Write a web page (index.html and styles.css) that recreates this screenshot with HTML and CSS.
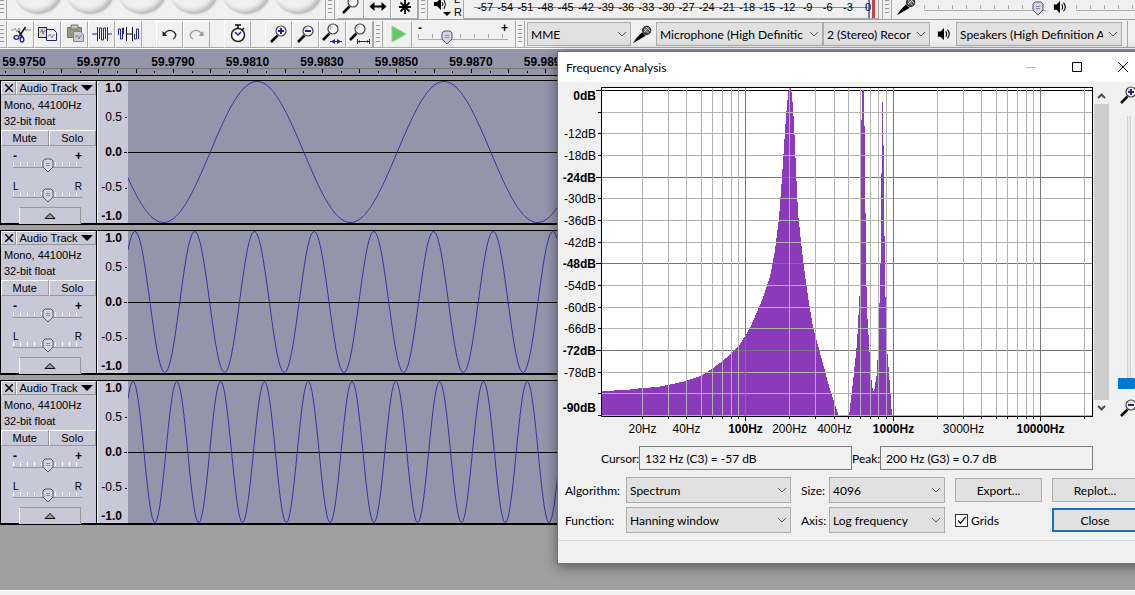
FILE: index.html
```html
<!DOCTYPE html>
<html lang="en">
<head>
  <meta charset="UTF-8">
  <meta name="viewport" content="width=device-width, initial-scale=1.0">
  <title>Audio Editor</title>
  <link rel="stylesheet" href="styles.css">
</head>
<body>
  <!-- shared icons -->
  <svg class="symbols" aria-hidden="true">
    <symbol id="i-lens" viewBox="0 0 24 24">
      <path d="M10.500 12.500L4 19" stroke="#000" stroke-width="2.500"/>
      <circle cx="14" cy="8" r="5" fill="#f4f4f8" stroke="#444" stroke-width="1.200"/>
      <path d="M11 8a3 3 0 0 1 3-3" fill="none" stroke="#bbb"/>
    </symbol>
    <symbol id="i-mic" viewBox="0 0 24 24">
      <path d="M1 22l4-6 6-6 4 4-7 4z" fill="#000"/>
      <circle cx="16" cy="8" r="4.500" fill="#555" stroke="#000"/>
      <path d="M13 6l5 5M15 4l5 5M13 10l5-5" stroke="#ddd"/>
    </symbol>
    <symbol id="i-speaker" viewBox="0 0 16 16">
      <path d="M1 5h3l4-4v14l-4-4H1z" fill="#000"/>
      <path d="M10 5q2 3 0 6M12 3q4 5 0 10" fill="none" stroke="#000" stroke-width="1.200"/>
    </symbol>
  </svg>

  <div class="app">
    <div class="toolbar toolbar-top">
      <span class="grip grip-first"></span>
      <div class="transport">
        <button aria-label="Pause"></button>
        <button aria-label="Play"></button>
        <button aria-label="Stop"></button>
        <button aria-label="Skip to start"></button>
        <button aria-label="Skip to end"></button>
        <button aria-label="Record"></button>
      </div>
      <span class="grip"></span>
      <button class="tool" aria-label="Zoom tool"><svg viewBox="0 0 24 24"><use href="#i-lens"/></svg></button>
      <button class="tool" aria-label="Time shift"><svg viewBox="0 0 24 24"><path d="M5 12.500h14" stroke="#000" stroke-width="2"/><path d="M8.500 8v9L3.500 12.500zM15.500 8v9l5-4.500z"/></svg></button>
      <button class="tool" aria-label="Multi-tool"><svg viewBox="0 0 24 24"><path d="M12 6v14M6 13h12M7.500 8.500l9 9M16.500 8.500l-9 9" stroke="#000" stroke-width="1.800"/></svg></button>
      <span class="grip"></span>
      <div class="meter">
        <svg class="meter-icon" viewBox="0 0 24 27">
          <path d="M4 10h3l4-4v12l-4-4H4z"/>
          <path d="M12 10q2 2 0 4M14 8q3 4 0 9" fill="none" stroke="#000"/>
          <path d="M13 20h8l-4 4z"/>
        </svg>
        <div class="channels"><span>L</span><span>R</span></div>
        <div class="scale">
          <span>-57</span><span>-54</span><span>-51</span><span>-48</span><span>-45</span><span>-42</span><span>-39</span><span>-36</span><span>-33</span><span>-30</span><span>-27</span><span>-24</span><span>-21</span><span>-18</span><span>-15</span><span>-12</span><span>-9</span><span>-6</span><span>-3</span><span>0</span>
        </div>
      </div>
      <span class="grip"></span>
      <svg class="mic" viewBox="0 0 24 24"><use href="#i-mic"/></svg>
      <input class="level" type="range" value="98" aria-label="Recording volume">
      <svg class="speaker" viewBox="0 0 16 16"><use href="#i-speaker"/></svg>
      <input class="level" type="range" value="80" aria-label="Playback volume">
    </div>

    <div class="toolbar">
      <span class="grip grip-first"></span>
      <button class="tool" aria-label="Cut"><svg viewBox="0 0 24 24"><path d="M2 8h3l1-2 2 4 2-4 1 3M15 8l1-2 1 3 1-2 1 1h3" fill="none" stroke="#999"/><path d="M16.500 5l-6 9M9.500 9l4 6" stroke="#111" stroke-width="1.500"/><g fill="none" stroke="#22228c" stroke-width="1.300"><ellipse cx="7.500" cy="15.500" rx="2.500" ry="1.800"/><ellipse cx="13" cy="17.500" rx="1.800" ry="2.500"/></g></svg></button>
      <button class="tool" aria-label="Copy"><svg viewBox="0 0 24 24"><path d="M2.500 5.500h8v10h-8z" fill="#ddd" stroke="#222"/><path d="M4 10h1l1-3 1 5 1-3h2" fill="none" stroke="#777"/><path d="M10.500 7.500h7l3 3v8h-10z" fill="#eee" stroke="#22228c"/><path d="M12 14h1l1-2 2 4 1-3h2" fill="none" stroke="#888"/></svg></button>
      <button class="tool" aria-label="Paste"><svg viewBox="0 0 24 24"><path d="M4.500 5.500h14v10h-14z" fill="#98987c" stroke="#777"/><path d="M8 3h7v4H8z" fill="#c4c4b8" stroke="#777"/><path d="M10.500 9.500h7l3 3v7h-10z" fill="#ccccd4" stroke="#8080a0"/><path d="M12 15h1l1-2 2 4 1-3h2" fill="none" stroke="#888"/></svg></button>
      <button class="tool" aria-label="Trim"><svg viewBox="0 0 24 24"><path d="M2 12h5M18 12h4M7.500 5v14M17.500 5v14" stroke="#22228c"/><path d="M9.500 17V6h2v12h2V6h2v11" fill="none" stroke="#22228c"/></svg></button>
      <button class="tool" aria-label="Silence"><svg viewBox="0 0 24 24"><path d="M1.500 13V7h2v10h2V6h1v6M17.500 12v5h2V7h2v10" fill="none" stroke="#22228c"/><path d="M9.500 5v14M15.500 5v14M9 12h7" stroke="#111"/></svg></button>
      <span class="space"></span>
      <button class="tool" aria-label="Undo"><svg viewBox="0 0 24 24"><path d="M6 12q5-6 10-2 4 4-1 7" fill="none" stroke="#222" stroke-width="1.300"/><path d="M4.500 9v5h5z" fill="#222"/></svg></button>
      <button class="tool" aria-label="Redo"><svg viewBox="0 0 24 24"><path d="M17 12q-5-6-10-2-4 4 1 7" fill="none" stroke="#999" stroke-width="1.300"/><path d="M18.500 9v5h-5z" fill="#999"/></svg></button>
      <span class="space"></span>
      <button class="tool" aria-label="Sync-lock"><svg viewBox="0 0 24 24"><circle cx="12" cy="13" r="6.500" fill="#fff" stroke="#222" stroke-width="1.500"/><path d="M12 6V2.500M9 3h6M18 6l-2 2" stroke="#111" stroke-width="1.500"/><path d="M9 10l3 3 3-3" fill="none" stroke="#22228c" stroke-width="1.500"/></svg></button>
      <span class="space"></span>
      <button class="tool" aria-label="Zoom in"><svg viewBox="0 0 24 24"><use href="#i-lens" y="1"/><path d="M11 9h6M14 6v6" stroke="#22228c" stroke-width="2"/></svg></button>
      <button class="tool" aria-label="Zoom out"><svg viewBox="0 0 24 24"><use href="#i-lens" y="1"/><path d="M11 9h6" stroke="#22228c" stroke-width="2"/></svg></button>
      <button class="tool" aria-label="Fit selection"><svg viewBox="0 0 24 24"><use href="#i-lens" x="-2" y="-1"/><path d="M9 19.500h12" stroke="#22228c"/><path d="M14 17v5l-4-2.500zM16 17v5l4-2.500z" fill="#22228c"/></svg></button>
      <button class="tool" aria-label="Fit project"><svg viewBox="0 0 24 24"><use href="#i-lens" x="-2" y="-1"/><path d="M9 19.500h12M9.500 17v5M21.500 17v5" stroke="#22228c"/><path d="M12 18v3l-2-1.500zM19 18v3l2-1.500z" fill="#22228c"/></svg></button>
      <span class="grip"></span>
      <button class="tool" aria-label="Play at speed"><svg viewBox="0 0 24 24"><path d="M5 4l14 8-14 8z" fill="#62c866" stroke="#8ad68c"/></svg></button>
      <div class="speed">
        <div class="ends"><span>-</span><span>+</span></div>
        <input class="level" type="range" value="29" aria-label="Playback speed">
      </div>
      <span class="grip"></span>
      <select class="host" aria-label="Audio host"><option>MME</option></select>
      <svg class="mic" viewBox="0 0 24 24"><use href="#i-mic"/></svg>
      <select class="rec-device" aria-label="Recording device"><option>Microphone (High Definitic</option></select>
      <select class="rec-channels" aria-label="Recording channels"><option>2 (Stereo) Recor</option></select>
      <svg class="speaker" viewBox="0 0 16 16"><use href="#i-speaker"/></svg>
      <select class="play-device" aria-label="Playback device"><option>Speakers (High Definition A</option></select>
      <span class="toolbar-end"></span>
    </div>

    <div class="ruler"><svg id="ruler"></svg></div>

    <main class="tracks">
      <section class="track">
        <div class="panel">
          <div class="panel-title"><button aria-label="Close track"><svg viewBox="0 0 8 8"><path d="M0 0l8 8M8 0L0 8" stroke="#000" stroke-width="1.500"/></svg></button><button>Audio Track <i class="caret"></i></button></div>
          <p>Mono, 44100Hz<br>32-bit float</p>
          <div class="panel-buttons"><button>Mute</button><button>Solo</button></div>
          <div class="knob"><div class="ends signs"><span>-</span><span>+</span></div><input class="level" type="range" aria-label="Gain"></div>
          <div class="knob"><div class="ends"><span>L</span><span>R</span></div><input class="level" type="range" aria-label="Pan"></div>
          <button class="collapse" aria-label="Collapse"><svg viewBox="0 0 12 7"><path d="M1 6.500l5-5 5 5z" fill="#999" stroke="#000"/></svg></button>
        </div>
        <div class="amplitude"><b>1.0</b><span>0.5</span><b>0.0</b><span>-0.5</span><b>-1.0</b></div>
        <div class="wave"><svg data-peak="129" data-period="187"></svg></div>
      </section>

      <section class="track">
        <div class="panel">
          <div class="panel-title"><button aria-label="Close track"><svg viewBox="0 0 8 8"><path d="M0 0l8 8M8 0L0 8" stroke="#000" stroke-width="1.500"/></svg></button><button>Audio Track <i class="caret"></i></button></div>
          <p>Mono, 44100Hz<br>32-bit float</p>
          <div class="panel-buttons"><button>Mute</button><button>Solo</button></div>
          <div class="knob"><div class="ends signs"><span>-</span><span>+</span></div><input class="level" type="range" aria-label="Gain"></div>
          <div class="knob"><div class="ends"><span>L</span><span>R</span></div><input class="level" type="range" aria-label="Pan"></div>
          <button class="collapse" aria-label="Collapse"><svg viewBox="0 0 12 7"><path d="M1 6.500l5-5 5 5z" fill="#999" stroke="#000"/></svg></button>
        </div>
        <div class="amplitude"><b>1.0</b><span>0.5</span><b>0.0</b><span>-0.5</span><b>-1.0</b></div>
        <div class="wave"><svg data-peak="7" data-period="59.7"></svg></div>
      </section>

      <section class="track">
        <div class="panel">
          <div class="panel-title"><button aria-label="Close track"><svg viewBox="0 0 8 8"><path d="M0 0l8 8M8 0L0 8" stroke="#000" stroke-width="1.500"/></svg></button><button>Audio Track <i class="caret"></i></button></div>
          <p>Mono, 44100Hz<br>32-bit float</p>
          <div class="panel-buttons"><button>Mute</button><button>Solo</button></div>
          <div class="knob"><div class="ends signs"><span>-</span><span>+</span></div><input class="level" type="range" aria-label="Gain"></div>
          <div class="knob"><div class="ends"><span>L</span><span>R</span></div><input class="level" type="range" aria-label="Pan"></div>
          <button class="collapse" aria-label="Collapse"><svg viewBox="0 0 12 7"><path d="M1 6.500l5-5 5 5z" fill="#999" stroke="#000"/></svg></button>
        </div>
        <div class="amplitude"><b>1.0</b><span>0.5</span><b>0.0</b><span>-0.5</span><b>-1.0</b></div>
        <div class="wave"><svg data-peak="5" data-period="43.8"></svg></div>
      </section>
    </main>
    <footer class="status"></footer>
  </div>

  <div class="dialog" role="dialog" aria-labelledby="dialog-title">
    <header class="titlebar">
      <span id="dialog-title">Frequency Analysis</span>
      <button aria-label="Minimize"><svg viewBox="0 0 12 12"><path d="M1 6.500h10" stroke="#bbb"/></svg></button>
      <button aria-label="Maximize"><svg viewBox="0 0 12 12"><path d="M1.500 1.500h9v9h-9z" fill="none" stroke="#000"/></svg></button>
      <button aria-label="Close window"><svg viewBox="0 0 12 12"><path d="M1 1l10 10M11 1L1 11" stroke="#000"/></svg></button>
    </header>

    <div class="plot-area">
      <div class="plot-column">
        <svg id="plot" viewBox="0 0 535 357">
          <g transform="translate(43 5)">
            <rect width="491" height="329" fill="#fff"/>
            <path d="M0 3.500H491" stroke="#000"/>
            <g fill="#8b3abb" shape-rendering="crispEdges">
              <path d="M0 329V304L25 303 41 301 56 300 67 298 85 294 99 289 105 286 119 276 130 267 139 257 149 241 162 211 169 190 174 163 178 131 181 90 183 60 185 30 187 8 188 1 190 1 191 8 193 36 195 83 197 126 202 173 207 210 212 240 221 273 229 303 238 329z"/>
              <path d="M248 329L252 295 256 256 259 200 260 63 261 3H263L264 73 265 176 266 223 269 273 271 300 273 305 276 286 278 236 280 156 281 19 282 12 283 103 284 193 286 260 289 300 291 329z"/>
            </g>
            <g id="grid"></g>
            <rect x=".5" y=".5" width="491" height="329" fill="none" stroke="#000"/>
          </g>
        </svg>
        <div class="readouts">
          <label for="cursor">Cursor:</label><input id="cursor" readonly value="132 Hz (C3) = -57 dB">
          <label for="peak">Peak:</label><input id="peak" readonly value="200 Hz (G3) = 0.7 dB">
        </div>
      </div>
      <div class="scrollbar">
        <svg viewBox="0 0 9 6"><path d="M1 5l3.500-3.500L8 5" fill="none" stroke="#444" stroke-width="1.800"/></svg>
        <span class="scroll-thumb"></span>
        <svg viewBox="0 0 9 6"><path d="M1 1l3.500 3.500L8 1" fill="none" stroke="#444" stroke-width="1.800"/></svg>
      </div>
      <div class="zoom">
        <svg viewBox="3 2 17 18"><use href="#i-lens" width="24" height="24"/><path d="M11 8h6M14 5v6" stroke="#22228c" stroke-width="2"/></svg>
        <input type="range" value="0" aria-label="Vertical zoom">
        <svg viewBox="3 2 17 18"><use href="#i-lens" width="24" height="24"/><path d="M11 8h6" stroke="#22228c" stroke-width="2"/></svg>
      </div>
    </div>

    <form class="options">
      <label for="algorithm">Algorithm:</label>
      <select id="algorithm"><option>Spectrum</option></select>
      <label for="size">Size:</label>
      <select id="size"><option>4096</option></select>
      <button type="button">Export...</button>
      <button type="button">Replot...</button>
      <label for="function">Function:</label>
      <select id="function"><option>Hanning window</option></select>
      <label for="axis">Axis:</label>
      <select id="axis"><option>Log frequency</option></select>
      <label class="check"><input type="checkbox" checked>Grids</label>
      <button type="button" class="default">Close</button>
    </form>
    <div class="dialog-status"></div>
  </div>

  <script src="script.js"></script>
</body>
</html>
```
FILE: styles.css
```css
*, *::before, *::after { box-sizing: border-box; }
body { margin: 0; height: 100vh; overflow: hidden; position: relative; font-family: Lato, "Open Sans", sans-serif; font-size: 12px; color: #000; background: #a0a0a0; }
button, input, select { font: inherit; color: inherit; margin: 0; }
button { padding: 0; border: 0; background: none; display: flex; align-items: center; justify-content: center; }
svg { display: block; flex-shrink: 0; }
.symbols { position: absolute; width: 0; height: 0; }
.app { display: flex; flex-direction: column; height: 100%; }

/* selects */
select {
  appearance: none;
  height: 24px;
  padding: 0 18px 0 3px;
  border: 1px solid #adadad;
  border-radius: 0;
  background: #e1e1e1 url("data:image/svg+xml,%3Csvg xmlns='http://www.w3.org/2000/svg' width='10' height='6'%3E%3Cpath d='M1 1l4 4 4-4' fill='none' stroke='%23555'/%3E%3C/svg%3E") no-repeat right 3px center;
}

/* toolbars */
.toolbar { display: flex; align-items: center; flex-shrink: 0; height: 29px; background: #f0f0f0; border-bottom: 1px solid #fff; box-shadow: inset 0 -1px #a8a8a8; overflow: hidden; white-space: nowrap; }
.toolbar > * { flex-shrink: 0; }
.toolbar-top { height: 20px; align-items: flex-end; border-bottom: 1px solid #a0a0a0; box-shadow: none; }
.grip { width: 10px; height: 27px; border: 1px solid #a8a8a8; border-width: 0 1px; background: repeating-linear-gradient(#999 0 1px, #f0f0f0 1px 4px) content-box; padding: 4px 2px; margin-right: 2px; }
.grip-first { width: 7px; margin-right: 0; border-left: 0; padding-left: 0; }
.tool { width: 27px; height: 27px; border: 1px solid; border-color: #fff #a8a8a8 #a8a8a8 #fff; }
.tool svg { width: 24px; height: 24px; }
.space { width: 14px; }
.transport { display: flex; gap: 2px; width: 318px; height: 27px; padding: 0 0 5px 6px; align-items: flex-end; }
.transport button { width: 50px; height: 50px; flex-shrink: 0; border-radius: 50%; background: #f0f0f0; box-shadow: inset -3px -3px 4px #bbb, 1px 1px 2px #ddd; }
.meter { display: flex; width: 449px; height: 27px; margin-right: 3px; align-items: center; font: 11px "Liberation Sans", sans-serif; }
.meter-icon { width: 24px; height: 27px; }
.channels { display: flex; flex-direction: column; justify-content: space-between; height: 25px; width: 9px; }
.scale { display: flex; flex: 1; height: 27px; padding: 0 0 0 11px; border: 1px solid #a8a8a8; line-height: 28px; text-align: center; background: linear-gradient(90deg, transparent 404px, #7078b8 404px 406px, transparent 406px 408px, #d04040 408px 411px, transparent 411px), linear-gradient(#888, #888) 10px 14px / 394px 1px no-repeat; }
.scale span { flex: 1 0 20px; }
.mic { width: 22px; height: 24px; margin: 0 2px 0 1px; }
.speaker { width: 14px; height: 14px; margin: 0 5px 0 7px; }
.toolbar-top .mic { margin: 0 6px 1px 2px; }
.toolbar-top .speaker { margin: 0 9px 5px 7px; }
.toolbar-top .level { width: 122px; margin-bottom: 3px; }
.host { width: 104px; }
.rec-device { width: 167px; }
.rec-channels { width: 107px; }
.play-device { width: 166px; }
.toolbar-end { width: 6px; height: 27px; border-right: 1px solid #a8a8a8; }

/* sliders */
.level {
  appearance: none;
  display: block;
  width: 100%;
  height: 16px;
  background:
    linear-gradient(#aaa, #aaa) 0 10px / 100% 1px no-repeat,
    repeating-linear-gradient(90deg, #a8a8a8 0 1px, transparent 1px 14px) 0 5px / 100% 4px no-repeat;
}
.level::-webkit-slider-thumb {
  appearance: none;
  width: 12px;
  height: 15px;
  background: url("data:image/svg+xml,%3Csvg xmlns='http://www.w3.org/2000/svg' width='12' height='15'%3E%3Cpath d='M3 1h6l2 2v6l-5 5-5-5V3z' fill='%23d4d4e2' stroke='%23555566'/%3E%3Cpath d='M4 5.500h4M4 7.500h4' stroke='%238888a0'/%3E%3C/svg%3E");
}
.ends { display: flex; justify-content: space-between; }
.speed { width: 90px; margin: 0 7px 0 6px; font: bold 12px "Liberation Sans", sans-serif; }
.speed .ends { height: 6px; line-height: 10px; }

/* time ruler */
.ruler { flex-shrink: 0; height: 27px; background: #9494ab; border-bottom: 1px solid #000; }
.ruler svg { width: 100%; height: 26px; font: bold 12px "Liberation Sans", sans-serif; }

/* tracks */
.tracks { flex: 1; min-height: 0; padding-top: 4px; background: #a0a0a0; font-family: "Liberation Sans", sans-serif; font-size: 11px; }
.track { display: flex; height: 145px; margin-bottom: 5px; border: 1px solid #000; border-bottom-width: 2px; background: #c8c8d7; }
.panel { width: 96px; border-right: 1px solid #000; }
.panel button { border: 1px solid; border-color: #fff #999 #999 #fff; }
.panel-title { display: flex; height: 14px; }
.panel-title button:first-child { width: 15px; }
.panel-title button:last-child { flex: 1; gap: 3px; }
.panel-title svg { width: 8px; height: 8px; }
.caret { border: 6px solid transparent; border-top-color: #000; border-bottom: 0; }
.panel p { margin: 0; padding: 2px 0 0 3px; height: 35px; line-height: 16px; }
.panel-buttons { display: flex; height: 16px; }
.panel-buttons button { flex: 1; }
.knob { width: 69px; height: 30px; margin-left: 12px; padding-top: 5px; font-size: 10px; }
.knob .ends { height: 6px; line-height: 12px; }
.knob .signs { font-size: 12px; font-weight: bold; line-height: 10px; }
.knob .level {
  background:
    linear-gradient(#999, #999) 0 10px / 100% 1px no-repeat,
    repeating-linear-gradient(90deg, #fff 0 1px, transparent 1px 7px) 0 5px / 100% 4px no-repeat;
}
.panel .collapse { width: 62px; height: 17px; margin: 1px 0 0 18px; border-color: #999 #999 #c8c8d7 #fff; }
.collapse svg { width: 12px; height: 7px; }
.amplitude { display: flex; flex-direction: column; justify-content: space-between; width: 31px; padding: 0 6px 0 0; border-left: 1px solid #fff; font-size: 12px; line-height: 14px; text-align: right; background: linear-gradient(#000, #000) right 1px top 36px / 2px 1px no-repeat, linear-gradient(#000, #000) right 1px top 71px / 3px 1px no-repeat, linear-gradient(#000, #000) right 1px top 107px / 2px 1px no-repeat; }
.amplitude span:nth-child(2) { margin-bottom: 6px; }
.amplitude span:nth-child(4) { margin-top: 6px; }
.wave { flex: 1; overflow: hidden; background: #9494ab; }
.wave svg { width: 100%; height: 142px; }
.status { flex-shrink: 0; height: 5px; border-top: 1px solid #fff; background: #f0f0f0; }

/* analysis window */
.dialog { position: absolute; top: 51px; left: 557px; right: -12px; border: 1px solid #3f7fb0; background: #f0f0f0; box-shadow: 0 3px 12px rgba(0,0,0,0.45); }
.titlebar { display: flex; align-items: center; height: 30px; padding-left: 8px; background: #fff; }
.titlebar span { flex: 1; }
.titlebar button { width: 46px; height: 30px; }
.titlebar svg { width: 12px; height: 12px; }
.plot-area { display: flex; }
.plot-column { flex: 1; min-width: 0; }
#plot { width: 100%; font: 12px "Liberation Sans", sans-serif; }
.readouts { display: flex; align-items: center; height: 38px; padding-left: 43px; }
.readouts label { width: 38px; }
.readouts label:nth-of-type(2) { width: 28px; }
.readouts input { flex: 1; min-width: 0; height: 24px; padding: 0 5px; border: 1px solid #7a7a7a; border-radius: 0; background: #f0f0f0; }
.scrollbar { display: flex; flex-direction: column; align-items: center; justify-content: space-between; width: 16px; height: 330px; margin-top: 5px; padding: 6px 0; }
.scrollbar svg { width: 9px; height: 6px; }
.scroll-thumb { width: 15px; height: 296px; background: #cdcdcd; }
.zoom { display: flex; flex-direction: column; align-items: center; width: 37px; height: 331px; margin-top: 4px; padding-left: 2px; }
.zoom svg { width: 17px; height: 18px; }
.zoom input { appearance: none; flex: 1; width: 22px; margin: 12px 0 10px; writing-mode: vertical-lr; direction: rtl; background: linear-gradient(#e8e8e8, #e8e8e8) center / 2px 100% no-repeat, linear-gradient(#d0d0d0, #d0d0d0) center / 4px 100% no-repeat; }
.zoom input::-webkit-slider-thumb { appearance: none; width: 22px; height: 11px; background: #0078d7; clip-path: polygon(0 0, 75% 0, 100% 50%, 75% 100%, 0 100%); }

/* options */
.options { display: grid; grid-template-columns: 51px 1fr 18px 116px 87px 86px; gap: 4px 10px; align-items: center; padding: 0 8px 0 7px; }
.options select { height: 26px; width: 100%; }
.options button { height: 24px; border: 1px solid #adadad; background: #e1e1e1; }
.options .default { border: 2px solid #1a70b0; }
.options label { white-space: nowrap; }
.check { display: flex; align-items: center; gap: 3px; }
.check input {
  appearance: none;
  width: 13px;
  height: 13px;
  border: 1px solid #333;
  background: #fff url("data:image/svg+xml,%3Csvg xmlns='http://www.w3.org/2000/svg' width='11' height='11'%3E%3Cpath d='M2 5.500l2.500 3L9.500 2' fill='none' stroke='%23222' stroke-width='1.300'/%3E%3C/svg%3E") center no-repeat;
}
.dialog-status { height: 23px; margin-top: 7px; border-top: 1px solid #d8d8d8; }
```
FILE: script.js
```js
const NS = 'http://www.w3.org/2000/svg';

function add(parent, tag, attrs, text) {
  const el = document.createElementNS(NS, tag);
  for (const key in attrs) el.setAttribute(key, attrs[key]);
  if (text) el.textContent = text;
  parent.appendChild(el);
}

// time ruler
const ruler = document.getElementById('ruler');
add(ruler, 'path', { d: 'M0 19.5H4000', stroke: '#777' });
for (let i = -1; i < 60; i++) {
  const x = Math.round(24 + i * 18.62) + 0.5;
  add(ruler, 'path', { d: `M${x} ${i % 2 ? 22 : 20}V24`, stroke: '#000' });
}
for (let i = 0; i < 8; i++) {
  add(ruler, 'text', { x: 24 + i * 74.5, y: 17, 'text-anchor': 'middle' }, (59.975 + i * 0.002).toFixed(4));
}

// waveforms
document.querySelectorAll('.wave svg').forEach(svg => {
  const peak = Number(svg.dataset.peak);
  const period = Number(svg.dataset.period);
  const points = [];
  for (let x = 0; x < 2000; x++) {
    points.push(x + ',' + (71 - 70.5 * Math.cos(2 * Math.PI * (x - peak) / period)).toFixed(1));
  }
  add(svg, 'path', { d: 'M0 71.5H4000', stroke: '#000' });
  add(svg, 'polyline', { points: points.join(' '), fill: 'none', stroke: '#3434a8' });
});

// spectrum grid
const grid = document.getElementById('grid');
const freqX = f => Math.round(144 + 147.5 * Math.log10(f / 100)) + 0.5;
const labels = [20, 40, 100, 200, 400, 1000, 3000, 10000];

for (let db = 0; db >= -90; db -= 6) {
  const y = Math.round(3 - db * 3.61) + 0.5;
  const major = db % 24 === 0;
  if (db < 0) add(grid, 'path', { d: `M0 ${y}H491`, stroke: major ? '#777' : '#b2b2b2' });
  add(grid, 'path', { d: `M${major ? -5 : -3} ${y}H0`, stroke: '#000' });
  if (db === -6 || db === -84) continue;
  const textY = db === 0 ? 13 : db === -90 ? 325 : y + 4;
  add(grid, 'text', { x: -5, y: textY, 'text-anchor': 'end', 'font-weight': major || db === -90 ? 'bold' : 'normal' }, db + 'dB');
}

for (let decade = 10; decade <= 10000; decade *= 10) {
  for (let n = 1; n < 10; n++) {
    const f = decade * n;
    if (f < 20 || f > 20000) continue;
    const x = freqX(f);
    const major = n === 1;
    add(grid, 'path', { d: `M${x} 0V329`, stroke: major ? '#777' : '#b2b2b2' });
    add(grid, 'path', { d: `M${x} 329v${major ? 5 : 3}`, stroke: '#000' });
    if (labels.includes(f)) {
      add(grid, 'text', { x: x, y: 346, 'text-anchor': 'middle', 'font-weight': major ? 'bold' : 'normal' }, f + 'Hz');
    }
  }
}
```
